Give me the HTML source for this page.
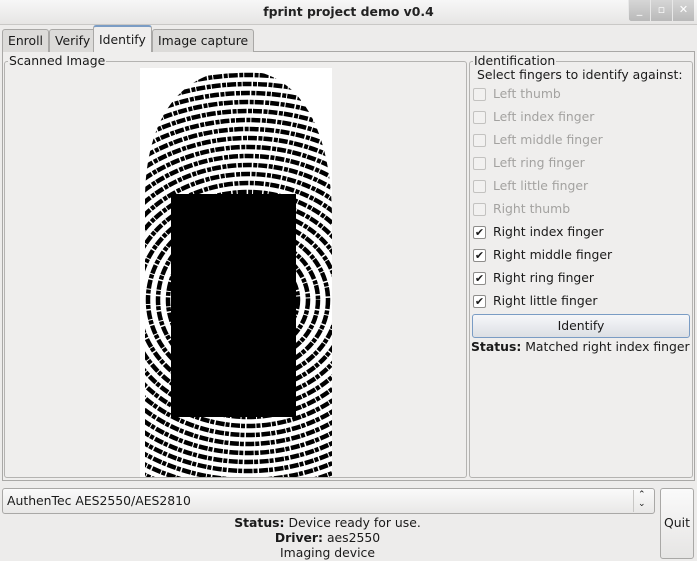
<!DOCTYPE html>
<html><head><meta charset="utf-8"><style>
*{box-sizing:border-box;margin:0;padding:0}
body{width:697px;height:561px;background:#edeceb;font-family:"DejaVu Sans","Liberation Sans",sans-serif;font-size:12.4px;color:#1a1a1a;position:relative;overflow:hidden}
.abs{position:absolute}
.title{left:0;top:0;width:697px;height:25px;background:linear-gradient(#f7f7f7,#e6e5e4);border-bottom:1px solid #c9c8c6;text-align:center;font-weight:bold;font-size:12.4px;line-height:24px;color:#222}
.wb{height:21px;width:22px;background:linear-gradient(#d6d6d6,#b9b9b9);border-left:1px solid #e8e8e8;color:#fff;text-align:center;font-size:11px;line-height:20px}
.tab{top:29px;height:23px;border:1px solid #a9a8a6;border-bottom:none;border-radius:3px 3px 0 0;background:#dcdbd9;line-height:22px;padding:0 5px}
.tab.sel{top:25px;height:27px;background:#efeeed;border-top:2px solid #7a9cc4;line-height:26px}
.panel{left:2px;top:51px;width:693px;height:430px;border:1px solid #a9a8a6;background:#efeeed}
.frame{border:1px solid #b4b3b1;border-radius:3px}
.lab{background:#efeeed;padding:0 1px;line-height:14px}
.cb{left:473px;width:13px;height:13px;border:1px solid #8e8d8b;border-radius:2px;background:#fff;font-size:11px;line-height:11px;text-align:center}
.cb.d{border-color:#c3c2c0;background:#f2f1f0}
.ct{left:493px}
.ct.d{color:#a3a2a0}
</style></head><body>
<div class="abs title">fprint project demo v0.4</div>
<div class="abs" style="left:628px;top:0;width:68px;height:22px;border-radius:0 0 0 6px;overflow:hidden;display:flex">
<div class="wb">_</div><div class="wb">▫</div><div class="wb">✕</div></div>
<div class="abs panel"></div>
<div class="abs tab" style="left:2px">Enroll</div>
<div class="abs tab" style="left:49px">Verify</div>
<div class="abs tab sel" style="left:93px">Identify</div>
<div class="abs tab" style="left:152px">Image capture</div>

<div class="abs frame" style="left:4px;top:61px;width:463px;height:417px"></div>
<div class="abs lab" style="left:8px;top:54px">Scanned Image</div>
<svg class="abs" style="left:0;top:0" width="697" height="561">
<defs><clipPath id="c"><path d="M145 477 L145 200 C145 120 180 70 240 70 C300 70 332 130 332 220 L332 477 Z"/></clipPath></defs>
<rect x="140" y="68" width="192" height="409" fill="#fff"/>
<g clip-path="url(#c)" fill="none" stroke="#000" stroke-width="4.5" stroke-dasharray="9 1.5 4 1">
<ellipse cx="248" cy="300" rx="10" ry="9"/><ellipse cx="248" cy="300" rx="20" ry="18"/>
<ellipse cx="248" cy="300" rx="30" ry="27"/><ellipse cx="248" cy="300" rx="40" ry="36"/>
<ellipse cx="248" cy="300" rx="50" ry="45"/><ellipse cx="248" cy="300" rx="60" ry="54"/>
<ellipse cx="248" cy="300" rx="70" ry="63"/><ellipse cx="248" cy="300" rx="80" ry="72"/>
<ellipse cx="248" cy="300" rx="90" ry="81"/><ellipse cx="248" cy="300" rx="100" ry="90"/>
<ellipse cx="248" cy="300" rx="110" ry="99"/><ellipse cx="248" cy="300" rx="120" ry="108"/>
<ellipse cx="248" cy="300" rx="130" ry="117"/><ellipse cx="248" cy="300" rx="140" ry="126"/>
<ellipse cx="248" cy="300" rx="150" ry="135"/><ellipse cx="248" cy="300" rx="160" ry="144"/>
<ellipse cx="248" cy="300" rx="170" ry="153"/><ellipse cx="248" cy="300" rx="180" ry="162"/>
<ellipse cx="248" cy="300" rx="190" ry="171"/><ellipse cx="248" cy="300" rx="200" ry="180"/>
<ellipse cx="248" cy="300" rx="210" ry="189"/><ellipse cx="248" cy="300" rx="220" ry="198"/>
<ellipse cx="248" cy="300" rx="230" ry="207"/><ellipse cx="248" cy="300" rx="240" ry="216"/>
<ellipse cx="248" cy="300" rx="250" ry="225"/><ellipse cx="248" cy="300" rx="260" ry="234"/>
</g>
<rect x="171" y="194" width="125" height="223" fill="#000"/>
</svg>

<div class="abs frame" style="left:469px;top:61px;width:224px;height:417px"></div>
<div class="abs lab" style="left:473px;top:54px">Identification</div>
<div class="abs" style="left:477px;top:67px">Select fingers to identify against:</div>
<div class="abs cb d" style="top:88px"></div><div class="abs ct d" style="top:86px">Left thumb</div>
<div class="abs cb d" style="top:111px"></div><div class="abs ct d" style="top:109px">Left index finger</div>
<div class="abs cb d" style="top:134px"></div><div class="abs ct d" style="top:132px">Left middle finger</div>
<div class="abs cb d" style="top:157px"></div><div class="abs ct d" style="top:155px">Left ring finger</div>
<div class="abs cb d" style="top:180px"></div><div class="abs ct d" style="top:178px">Left little finger</div>
<div class="abs cb d" style="top:203px"></div><div class="abs ct d" style="top:201px">Right thumb</div>
<div class="abs cb" style="top:226px">✔</div><div class="abs ct" style="top:224px">Right index finger</div>
<div class="abs cb" style="top:249px">✔</div><div class="abs ct" style="top:247px">Right middle finger</div>
<div class="abs cb" style="top:272px">✔</div><div class="abs ct" style="top:270px">Right ring finger</div>
<div class="abs cb" style="top:295px">✔</div><div class="abs ct" style="top:293px">Right little finger</div>
<div class="abs" style="left:472px;top:314px;width:218px;height:24px;border:1px solid #7a9cc4;border-radius:3px;background:linear-gradient(#f6f7f9,#dcdfe4);text-align:center;line-height:22px">Identify</div>
<div class="abs" style="left:471px;top:339px;white-space:nowrap"><b>Status:</b> Matched right index finger</div>

<div class="abs" style="left:2px;top:488px;width:653px;height:26px;border:1px solid #a9a8a6;border-radius:3px;background:linear-gradient(#fafafa,#e9e8e7);line-height:24px;padding-left:4px">AuthenTec AES2550/AES2810</div>
<div class="abs" style="left:633px;top:490px;width:1px;height:22px;background:#c8c7c5"></div>
<div class="abs" style="left:638px;top:491px;font-size:9px;line-height:9px">⌃<br>⌄</div>
<div class="abs" style="left:660px;top:488px;width:34px;height:71px;border:1px solid #a9a8a6;border-radius:3px;background:linear-gradient(#fafafa,#e6e5e4);text-align:center;line-height:68px">Quit</div>
<div class="abs" style="left:0;top:515px;width:655px;text-align:center;line-height:15px"><b>Status:</b> Device ready for use.<br><b>Driver:</b> aes2550<br>Imaging device</div>
</body></html>
